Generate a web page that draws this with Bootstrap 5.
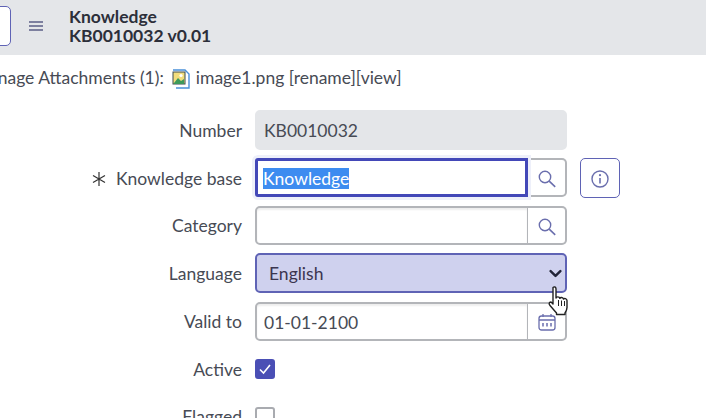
<!DOCTYPE html>
<html lang="en">
<head>
    <meta charset="UTF-8">
    <meta name="viewport" content="width=device-width, initial-scale=1.0">
    <title>Knowledge KB0010032</title>
    <link href="https://cdn.jsdelivr.net/npm/bootstrap@5.3.0/dist/css/bootstrap.min.css" rel="stylesheet">
    <style>
        html, body {
            height: 418px;
            overflow: hidden;
        }
        body {
            font-family: "Lato", "Liberation Sans", sans-serif;
            font-size: 17.5px;
            color: #3c4049;
            background: #fff;
        }
        .kb-head {
            height: 55px;
            background: #e4e6e9;
        }
        .kb-back {
            width: 40px;
            height: 40px;
            margin-left: -29px;
            margin-top: -3px;
            background: #fff;
            border: 1.5px solid #5f63b5;
            border-radius: 5px;
        }
        .kb-menu {
            margin-left: 18px;
            margin-right: 26px;
            margin-top: -3px;
            width: 14px;
        }
        .kb-title {
            font-weight: 700;
            line-height: 19px;
            margin-top: -3px;
            color: #2c2f3a;
        }
        .kb-attach {
            height: 47px;
            margin-left: -27px;
            white-space: nowrap;
            color: #474b55;
        }
        .kb-attach a {
            color: #474b55;
            text-decoration: none;
        }
        .kb-attach-icon {
            margin: 0 6px 0 8px;
        }
        .kb-form {
            padding-top: 8px;
        }
        .kb-row {
            min-height: 40px;
            margin-bottom: 7.75px;
        }
        .kb-label {
            width: 242px;
            margin-right: 13px;
            padding-top: 2px;
            color: #474b55;
        }
        .kb-star {
            margin-right: 9px;
        }
        .kb-field {
            width: 312px;
            height: 40px;
            color: #474b55;
            border: 2px solid #b3b5b9;
            border-radius: 5px;
            background: #fff;
            padding: 2px 7px 0;
        }
        .kb-readonly {
            background: #e4e6e9;
            border-color: #e4e6e9;
        }
        .kb-group {
            width: 312px;
        }
        .kb-group .form-control {
            height: 39px;
            border: 2px solid #b3b5b9;
            border-right-width: 1px;
            border-radius: 5px 0 0 5px;
            padding: 2px 7px 0;
            font-size: 17.5px;
            color: #474b55;
            box-shadow: inset 0 2px 2px #eeeeee;
        }
        .kb-group .kb-focused {
            border: 3px solid #4348b8;
            border-radius: 3px;
            box-shadow: 0 0 0 3px #eef0fa;
            position: relative;
            padding: 2px 5px 0;
        }
        .kb-focused::selection {
            background: #3d8cf0;
            color: #fff;
        }
        .kb-addon {
            width: 40px;
            height: 39px;
            border: 2px solid #b3b5b9;
            border-left: 0;
            border-radius: 0 5px 5px 0;
            background: #fff;
            padding: 0 0 0 2px;
        }
        .kb-info {
            width: 40px;
            height: 40px;
            margin-left: 13px;
            padding: 0;
            background: #fff;
            border: 1.5px solid #5f63b5;
            border-radius: 5px;
        }
        .kb-select {
            width: 312px;
            height: 40px;
            padding: 2px 12px 0;
            font-size: 17.5px;
            color: #3b3550;
            background-color: #cfd1ee;
            background-image: url("data:image/svg+xml,%3csvg xmlns='http://www.w3.org/2000/svg' viewBox='0 0 16 16'%3e%3cpath fill='none' stroke='%23222438' stroke-linecap='round' stroke-linejoin='round' stroke-width='3' d='m2 5 6 6 6-6'/%3e%3c/svg%3e");
            background-size: 13px 13px;
            background-position: right 3px center;
            border: 2px solid #5f63b5;
            border-radius: 5px;
        }
        .kb-check {
            width: 20px;
            height: 20px;
            border-radius: 3px;
            border: 2px solid #a9abb0;
            background: #fff;
        }
        .kb-check-on {
            background: #4a4fb5;
            border-color: #4a4fb5;
        }
        .kb-hand {
            position: absolute;
            left: 546px;
            top: 285px;
        }
    </style>
</head>
<body>
    <div class="kb-head d-flex align-items-center">
        <div class="kb-back flex-shrink-0"></div>
        <svg class="kb-menu flex-shrink-0" width="14" height="10" viewBox="0 0 14 10">
            <path d="M0 1h14M0 5h14M0 9h14" stroke="#5b5f86" stroke-width="1.4" fill="none"/>
        </svg>
        <div class="kb-title">Knowledge<br>KB0010032 v0.01</div>
    </div>

    <div class="kb-attach d-flex align-items-center">
        <span>Manage Attachments (1):</span>
        <svg class="kb-attach-icon" width="18" height="20" viewBox="0 0 18 20">
            <path d="M1 1h12l4 4v14H4" fill="#fff" stroke="#4a90d9" stroke-width="1.4"/>
            <rect x="1" y="3" width="12" height="12" fill="#f2dd7c" stroke="#3a4a50" stroke-width="1"/>
            <path d="M2 14l4-5 3 3 3-2v5H2z" fill="#3d9a5b"/>
            <circle cx="9" cy="6.5" r="1.6" fill="#fff"/>
        </svg>
        <span>image1.png <a href="#">[rename]</a><a href="#">[view]</a></span>
    </div>

    <form class="kb-form">
        <div class="kb-row d-flex align-items-center">
            <label class="kb-label text-end">Number</label>
            <div class="kb-field kb-readonly d-flex align-items-center">KB0010032</div>
        </div>

        <div class="kb-row d-flex align-items-center">
            <label class="kb-label d-flex justify-content-end align-items-center">
                <svg class="kb-star" width="16" height="16" viewBox="0 0 16 16"><path d="M8 1v14M2 4.500l12 7M14 4.500l-12 7" stroke="#333" stroke-width="1.2" fill="none"/></svg>
                Knowledge base
            </label>
            <div class="kb-group input-group flex-nowrap">
                <input id="kbBase" class="form-control kb-focused" type="text" value="Knowledge">
                <button class="kb-addon" type="button" aria-label="Search">
                    <svg width="20" height="20" viewBox="0 0 20 20"><circle cx="8" cy="8" r="5.7" fill="none" stroke="#6a6ead" stroke-width="1.4"/><path d="M12.2 12.2l6 5.6" stroke="#6a6ead" stroke-width="1.6" fill="none"/></svg>
                </button>
            </div>
            <button class="kb-info flex-shrink-0" type="button" aria-label="Info">
                <svg width="20" height="20" viewBox="0 0 20 20"><circle cx="10" cy="10" r="8" fill="none" stroke="#6a6ead" stroke-width="1.4"/><path d="M10 9v5.5" stroke="#6a6ead" stroke-width="1.6"/><circle cx="10" cy="6.2" r="1.1" fill="#6a6ead"/></svg>
            </button>
        </div>

        <div class="kb-row d-flex align-items-center">
            <label class="kb-label text-end">Category</label>
            <div class="kb-group input-group flex-nowrap">
                <input class="form-control" type="text">
                <button class="kb-addon" type="button" aria-label="Search">
                    <svg width="20" height="20" viewBox="0 0 20 20"><circle cx="8" cy="8" r="5.7" fill="none" stroke="#6a6ead" stroke-width="1.4"/><path d="M12.2 12.2l6 5.6" stroke="#6a6ead" stroke-width="1.6" fill="none"/></svg>
                </button>
            </div>
        </div>

        <div class="kb-row d-flex align-items-center">
            <label class="kb-label text-end">Language</label>
            <select class="form-select kb-select"><option>English</option></select>
        </div>

        <div class="kb-row d-flex align-items-center">
            <label class="kb-label text-end">Valid to</label>
            <div class="kb-group input-group flex-nowrap">
                <input class="form-control" type="text" value="01-01-2100">
                <button class="kb-addon" type="button" aria-label="Calendar">
                    <svg width="20" height="20" viewBox="0 0 20 20"><rect x="2" y="4" width="16" height="14" rx="2.5" fill="none" stroke="#6a6ead" stroke-width="1.3"/><path d="M2 8h16M6 2v3M14 2v3" stroke="#6a6ead" stroke-width="1.3" fill="none"/><path d="M6 11v3.5M10 11v3.5M14 11v3.5" stroke="#6a6ead" stroke-width="1.5" fill="none"/></svg>
                </button>
            </div>
        </div>

        <div class="kb-row d-flex align-items-center">
            <label class="kb-label text-end">Active</label>
            <div class="kb-check kb-check-on d-flex align-items-center justify-content-center">
                <svg width="14" height="12" viewBox="0 0 14 12"><path d="M2 6.500l3.500 3.500L12 2" stroke="#fff" stroke-width="1.6" fill="none"/></svg>
            </div>
        </div>

        <div class="kb-row d-flex align-items-center">
            <label class="kb-label text-end">Flagged</label>
            <div class="kb-check"></div>
        </div>
    </form>

    <svg class="kb-hand" width="26" height="32" viewBox="0 0 24 32">
        <path d="M6 2.500c1.200-1.200 3-.6 3 1.200V13c.4-1.400 3.400-1.600 3.800.4.6-1.400 3.300-1.200 3.700.7.8-1 3.300-.7 3.500 1.400v7c0 2.500-1 4-2 5.500v1.500H9.500v-1.500L3 20.500c-1.400-1.500-1-3.500 1-3.500l2 2V3z" fill="#fff" stroke="#222" stroke-width="1.4" stroke-linejoin="round"/>
        <path d="M11.500 15v6M14.500 15.500v5.500M17.500 16v5" stroke="#222" stroke-width="1"/>
    </svg>

    <script>
        document.getElementById("kbBase").select();
    </script>
    <script src="https://cdn.jsdelivr.net/npm/bootstrap@5.3.0/dist/js/bootstrap.bundle.min.js"></script>
</body>
</html>
